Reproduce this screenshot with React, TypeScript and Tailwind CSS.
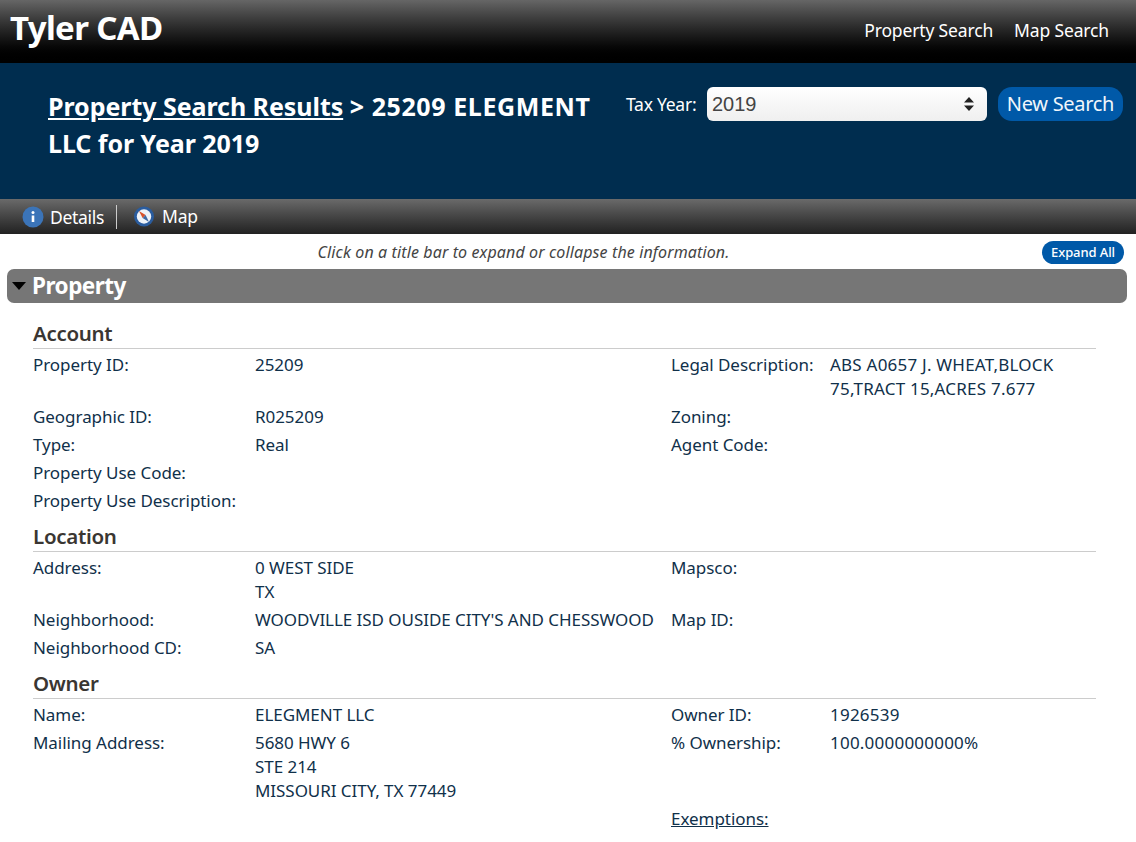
import { Fragment } from "react"

const font = "font-['Noto_Sans','Open_Sans',sans-serif]"

type Row = { a: string; b?: string[]; c?: string; d?: string[]; cUnderline?: boolean }

const sections: { title: string; rows: Row[] }[] = [
  {
    title: "Account",
    rows: [
      { a: "Property ID:", b: ["25209"], c: "Legal Description:", d: ["ABS A0657 J. WHEAT,BLOCK", "75,TRACT 15,ACRES 7.677"] },
      { a: "Geographic ID:", b: ["R025209"], c: "Zoning:" },
      { a: "Type:", b: ["Real"], c: "Agent Code:" },
      { a: "Property Use Code:" },
      { a: "Property Use Description:" },
    ],
  },
  {
    title: "Location",
    rows: [
      { a: "Address:", b: ["0 WEST SIDE", "TX"], c: "Mapsco:" },
      { a: "Neighborhood:", b: ["WOODVILLE ISD OUSIDE CITY'S AND CHESSWOOD"], c: "Map ID:" },
      { a: "Neighborhood CD:", b: ["SA"] },
    ],
  },
  {
    title: "Owner",
    rows: [
      { a: "Name:", b: ["ELEGMENT LLC"], c: "Owner ID:", d: ["1926539"] },
      { a: "Mailing Address:", b: ["5680 HWY 6", "STE 214", "MISSOURI CITY, TX 77449"], c: "% Ownership:", d: ["100.0000000000%"] },
      { a: "", c: "Exemptions:", cUnderline: true },
    ],
  },
]

function Lines({ items }: { items?: string[] }) {
  return (
    <div className="leading-[24px]">
      {items?.map((t) => <div key={t}>{t}</div>)}
    </div>
  )
}

function InfoIcon() {
  return (
    <svg width="22" height="22" viewBox="0 0 22 22">
      <circle cx="11" cy="11" r="10.5" fill="#3b74b8" />
      <circle cx="11" cy="6.5" r="1.5" fill="#fff" />
      <rect x="9.7" y="9.5" width="2.6" height="6.5" fill="#fff" />
    </svg>
  )
}

function CompassIcon() {
  return (
    <svg width="22" height="22" viewBox="0 0 22 22">
      <circle cx="11" cy="10.5" r="10" fill="#2a5c9e" />
      <circle cx="11" cy="10.5" r="7.2" fill="#eef2f8" />
      <path d="M6 5 L12.6 9 L9.6 12 Z" fill="#d9532c" />
      <path d="M16 16 L12.6 9 L9.6 12 Z" fill="#3f6aa5" />
    </svg>
  )
}

export default function App() {
  return (
    <div className={`${font} w-[1136px] h-[842px] overflow-hidden bg-white text-[#10304a] text-[17px]`}>
      {/* header */}
      <div className="h-[63px] bg-gradient-to-b from-[#666666] to-[#000000] flex items-center justify-between pl-[10px] pr-[27px]">
        <div className="text-white text-[33px] font-bold tracking-[-0.65px] leading-none pb-[8px]">Tyler CAD</div>
        <div className="flex gap-[21px] text-white text-[17.5px] tracking-[-0.15px] pb-[2px]">
          <span>Property Search</span>
          <span>Map Search</span>
        </div>
      </div>

      {/* title band */}
      <div className="h-[136px] bg-[#002d4f] flex items-start pl-[48px] pr-[13px]">
        <h1 className="w-[578px] pr-[20px] pt-[25px] text-white text-[25px] font-bold leading-[37px] tracking-[-0.05px]">
          <span className="underline">Property Search Results</span>{" "}
          <span className="tracking-[0.6px]">&gt; 25209 ELEGMENT</span>{" "}
          <span>LLC for Year 2019</span>
        </h1>
        <div className="flex items-center pt-[24px]">
          <span className="text-white text-[17.5px] tracking-[-0.25px] w-[81px]">Tax Year:</span>
          <div className="w-[280px] h-[34px] rounded-[6px] bg-gradient-to-b from-white to-[#efefef] flex items-center justify-between pl-[5px] pr-[12px] font-['Liberation_Sans',sans-serif] text-[20px] text-[#444444]">
            <span>2019</span>
            <svg width="12" height="16" viewBox="0 0 12 16">
              <path d="M6 1 L11 6.5 H1 Z M6 15 L1 9.5 H11 Z" fill="#222" />
            </svg>
          </div>
          <div className="ml-[11px] w-[125px] h-[34px] rounded-[14px] bg-[#0059a8] text-[#f0f6fb] text-[20px] tracking-[-0.3px] flex items-center justify-center">New Search</div>
        </div>
      </div>

      {/* tabs */}
      <div className="h-[35px] bg-gradient-to-b from-[#6a6a6a] to-[#222222] flex items-center pl-[22px] text-white text-[17.5px] tracking-[-0.3px]">
        <InfoIcon />
        <span className="ml-[6px] pr-[12px] border-r border-[#cccccc] leading-[24px]">Details</span>
        <span className="ml-[16px]"><CompassIcon /></span>
        <span className="ml-[7px]">Map</span>
      </div>

      {/* tip */}
      <div className="relative h-[35px] flex items-center justify-center pr-[89px] text-[16px] italic text-[#444444] tracking-[0.12px]">
        Click on a title bar to expand or collapse the information.
        <div className="absolute right-[12px] top-[7px] w-[82px] h-[23px] rounded-[12px] bg-[#0059a8] text-white text-[13px] not-italic font-medium tracking-[-0.1px] flex items-center justify-center">Expand All</div>
      </div>

      {/* section bar */}
      <div className="mx-[7px] w-[1120px] h-[34px] rounded-[7px] bg-[#767676] flex items-center pl-[5px] text-white text-[22.5px] font-bold tracking-[-0.5px]">
        <span className="w-0 h-0 border-l-[7.5px] border-r-[7.5px] border-t-[8px] border-l-transparent border-r-transparent border-t-black mr-[5px]" />
        <span className="ml-[1px]">Property</span>
      </div>

      {/* details */}
      <div className="pl-[33px] pr-[40px] pt-[17px] tracking-[-0.05px]">
        {sections.map((s) => (
          <div key={s.title} className="mb-[6px]">
            <div className="text-[20.5px] font-semibold text-[#3a3632] leading-[26px] pb-[2px] border-b border-[#cccccc] tracking-[-0.3px]">{s.title}</div>
            <div className="grid grid-cols-[222px_416px_159px_266px] pt-[4px]">
              {s.rows.map((r, i) => (
                <Fragment key={i}>
                  <div className="leading-[24px] pb-[4px]">{r.a}</div>
                  <div className="pb-[4px]"><Lines items={r.b} /></div>
                  <div className={`leading-[24px] pb-[4px] ${r.cUnderline ? "underline" : ""}`}>{r.c}</div>
                  <div className="pb-[4px] tracking-[0.22px]"><Lines items={r.d} /></div>
                </Fragment>
              ))}
            </div>
          </div>
        ))}
      </div>
    </div>
  )
}
